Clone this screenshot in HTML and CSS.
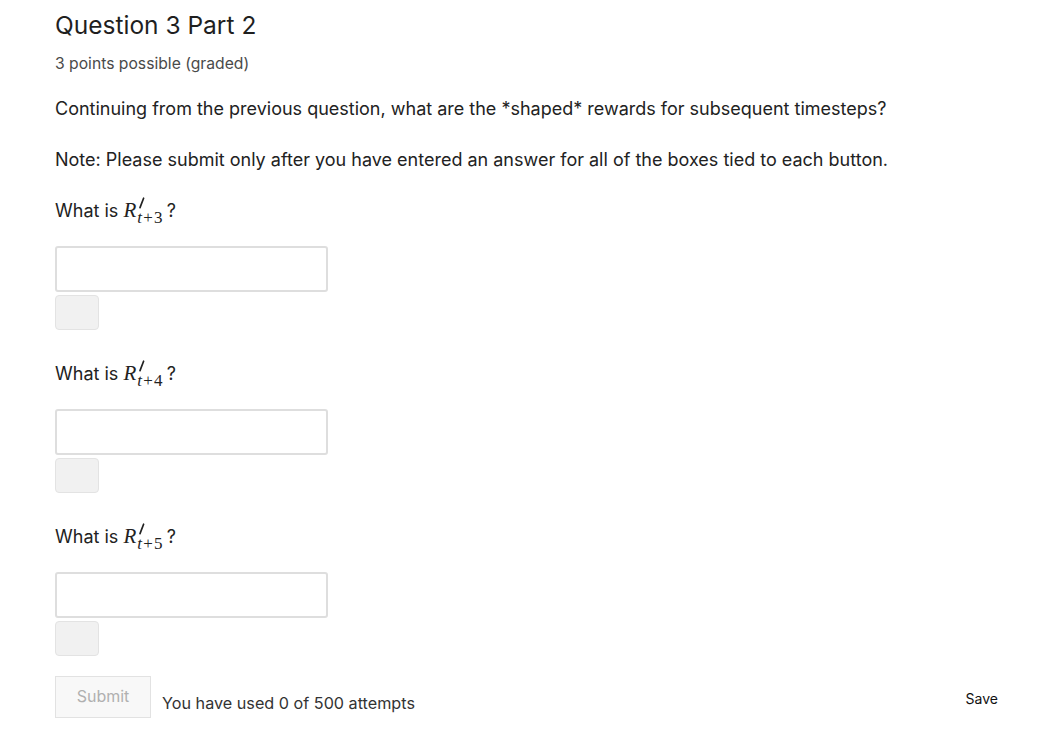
FILE: index.html
```html
<!DOCTYPE html>
<html>
<head>
<meta charset="utf-8">
<link rel="stylesheet" href="styles.css">
</head>
<body>
<div class="problem">
  <h2 class="title">Question 3 Part 2</h2>
  <div class="points">3 points possible (graded)</div>
  <p class="text">Continuing from the previous question, what are the *shaped* rewards for subsequent timesteps?</p>
  <p class="text note">Note: Please submit only after you have entered an answer for all of the boxes tied to each button.</p>

  <div class="q">
    <div class="qlabel">What is <span class="math"><span class="mi">R</span><span class="supsub"><svg class="pr" width="7" height="12" viewBox="0 0 7 12"><path d="M5.6 1.2 L2 10.6" stroke="#222" stroke-width="1.7" stroke-linecap="round"/></svg><span class="sub"><span class="mi">t</span>+3</span></span></span>?</div>
    <input class="answer" type="text">
    <div class="status"></div>
  </div>
  <div class="q">
    <div class="qlabel">What is <span class="math"><span class="mi">R</span><span class="supsub"><svg class="pr" width="7" height="12" viewBox="0 0 7 12"><path d="M5.6 1.2 L2 10.6" stroke="#222" stroke-width="1.7" stroke-linecap="round"/></svg><span class="sub"><span class="mi">t</span>+4</span></span></span>?</div>
    <input class="answer" type="text">
    <div class="status"></div>
  </div>
  <div class="q">
    <div class="qlabel">What is <span class="math"><span class="mi">R</span><span class="supsub"><svg class="pr" width="7" height="12" viewBox="0 0 7 12"><path d="M5.6 1.2 L2 10.6" stroke="#222" stroke-width="1.7" stroke-linecap="round"/></svg><span class="sub"><span class="mi">t</span>+5</span></span></span>?</div>
    <input class="answer" type="text">
    <div class="status"></div>
  </div>

  <div class="actions">
    <button class="submit">Submit</button>
    <span class="attempts">You have used 0 of 500 attempts</span>
    <span class="save">Save</span>
  </div>
</div>
</body>
</html>
```
FILE: styles.css
```css
html, body { margin: 0; padding: 0; background: #fff; }
body { font-family: Inter, "Noto Sans", sans-serif; color: #222; }
.problem { padding: 0 49px 0 55px; }
.title { font-size: 24.5px; font-weight: 400; margin: 0; padding-top: 10px; line-height: 30px; color: #1f1f1f; }
.points { font-size: 15.7px; color: #4a4a4a; margin-top: 14px; line-height: 20px; }
.text { font-size: 18px; margin: 22px 0 0 0; line-height: 26px; color: #222; }
.text.note { margin-top: 25px; }
.q { margin-top: 24px; }
.q + .q { margin-top: 30px; }
.qlabel { font-size: 18px; line-height: 26px; color: #222; height: 26px; white-space: nowrap; }
.math { font-family: "Liberation Serif", "DejaVu Serif", serif; font-size: 21px; margin-left: 0; margin-right: 3px; }
.mi { font-style: italic; }
.supsub { position: relative; display: inline-block; margin-left: 1px; }
.pr { position: absolute; left: 1px; top: 0; }
.sub { position: relative; top: 6px; font-size: 17px; letter-spacing: 1.2px; }
.answer { display: block; box-sizing: border-box; width: 273px; height: 46px; margin: 23px 0 0 0; border: 2px solid #dedede; border-radius: 3px; background: #fff; padding: 0 8px; font: inherit; }
.status { width: 44px; height: 35px; box-sizing: border-box; margin-top: 3px; background: #f1f1f1; border: 1px solid #e3e3e3; border-radius: 4px; }
.actions { display: flex; align-items: flex-end; margin-top: 20px; }
.submit { width: 96px; height: 42px; box-sizing: border-box; background: #f8f8f8; border: 1px solid #e2e2e2; border-radius: 0; color: #b0b0b0; font-family: Inter, sans-serif; font-size: 16px; padding: 0 0 2px 0; }
.attempts { font-size: 16.2px; color: #333; margin-left: 11px; line-height: 20px; padding-bottom: 5px; }
.save { margin-left: auto; font-size: 14px; color: #111; padding-bottom: 10px; line-height: 18px; }
```
